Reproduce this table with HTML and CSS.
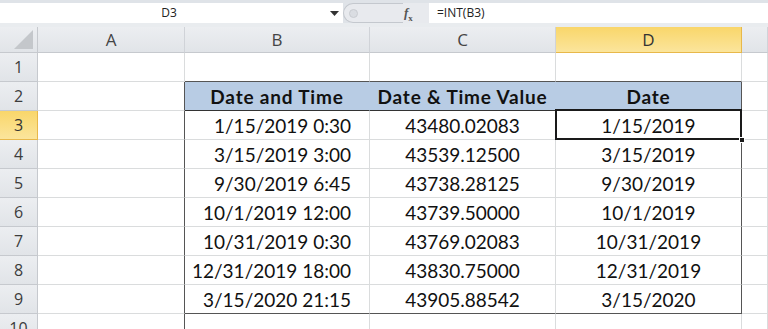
FILE: index.html
```html
<!DOCTYPE html>
<html lang="en">
<head>
    <meta charset="UTF-8">
    <meta name="viewport" content="width=device-width, initial-scale=1.0">
    <title>INT date</title>
    <link rel="stylesheet" href="styles.css">
</head>
<body>
    <div class="formula-bar">
        <div class="name-box">D3</div>
        <div class="name-drop">
            <svg width="9" height="5" viewBox="0 0 9 5"><path d="M0 0h9L4.5 5z" fill="#333"/></svg>
        </div>
        <div class="pill"><span class="knob"></span></div>
        <div class="fx"><i>f</i><sub>x</sub></div>
        <div class="formula">=INT(B3)</div>
    </div>

    <div class="sheet">
        <div class="row head">
            <div class="rh corner"><span class="tri"></span></div>
            <div class="ch">A</div>
            <div class="ch">B</div>
            <div class="ch">C</div>
            <div class="ch active">D</div>
            <div class="ch"></div>
        </div>

        <div class="row r1">
            <div class="rh">1</div>
            <div class="c"></div>
            <div class="c"></div>
            <div class="c"></div>
            <div class="c"></div>
            <div class="c"></div>
        </div>

        <div class="row thead">
            <div class="rh">2</div>
            <div class="c"></div>
            <div class="c th">Date and Time</div>
            <div class="c th">Date &amp; Time Value</div>
            <div class="c th">Date</div>
            <div class="c"></div>
        </div>

        <div class="row">
            <div class="rh active">3</div>
            <div class="c"></div>
            <div class="c dt">1/15/2019 0:30</div>
            <div class="c num">43480.02083</div>
            <div class="c num selected">1/15/2019<span class="handle"></span></div>
            <div class="c"></div>
        </div>

        <div class="row">
            <div class="rh">4</div>
            <div class="c"></div>
            <div class="c dt">3/15/2019 3:00</div>
            <div class="c num">43539.12500</div>
            <div class="c num">3/15/2019</div>
            <div class="c"></div>
        </div>

        <div class="row">
            <div class="rh">5</div>
            <div class="c"></div>
            <div class="c dt">9/30/2019 6:45</div>
            <div class="c num">43738.28125</div>
            <div class="c num">9/30/2019</div>
            <div class="c"></div>
        </div>

        <div class="row">
            <div class="rh">6</div>
            <div class="c"></div>
            <div class="c dt">10/1/2019 12:00</div>
            <div class="c num">43739.50000</div>
            <div class="c num">10/1/2019</div>
            <div class="c"></div>
        </div>

        <div class="row">
            <div class="rh">7</div>
            <div class="c"></div>
            <div class="c dt">10/31/2019 0:30</div>
            <div class="c num">43769.02083</div>
            <div class="c num">10/31/2019</div>
            <div class="c"></div>
        </div>

        <div class="row">
            <div class="rh">8</div>
            <div class="c"></div>
            <div class="c dt">12/31/2019 18:00</div>
            <div class="c num">43830.75000</div>
            <div class="c num">12/31/2019</div>
            <div class="c"></div>
        </div>

        <div class="row last">
            <div class="rh">9</div>
            <div class="c"></div>
            <div class="c dt">3/15/2020 21:15</div>
            <div class="c num">43905.88542</div>
            <div class="c num">3/15/2020</div>
            <div class="c"></div>
        </div>

        <div class="row">
            <div class="rh">10</div>
            <div class="c"></div>
            <div class="c"></div>
            <div class="c"></div>
            <div class="c"></div>
            <div class="c"></div>
        </div>
    </div>
</body>
</html>
```

FILE: styles.css
```css
* {
    box-sizing: border-box;
    margin: 0;
    padding: 0;
}

body {
    width: 768px;
    height: 329px;
    overflow: hidden;
    background-color: white;
    font-family: 'Open Sans', 'Noto Sans', sans-serif;
}

/* formula bar */
.formula-bar {
    display: flex;
    height: 27px;
    padding-top: 3px;
    background-color: #dfe3e8;
    border-bottom: 4px solid #e9ecef;
}

.name-box {
    width: 330px;
    height: 20px;
    background-color: white;
    text-align: center;
    font-size: 12px;
    line-height: 20px;
    color: #222;
    padding-left: 8px;
}

.name-drop {
    width: 13px;
    height: 20px;
    background-color: white;
    display: flex;
    align-items: center;
}

.pill {
    width: 60px;
    height: 20px;
    background-color: #e8eaee;
    border: 1px solid #c4c8ce;
    border-right: none;
    border-radius: 10px 0 0 10px;
    display: flex;
    align-items: center;
    padding-left: 5px;
}

.knob {
    width: 9px;
    height: 9px;
    border-radius: 50%;
    background-color: #dadde2;
    border: 1px solid #c9ccd1;
}

.fx {
    width: 26px;
    height: 20px;
    background-color: #e8eaee;
    font-family: 'Liberation Serif', serif;
    font-size: 13px;
    line-height: 20px;
    color: #555;
    font-weight: bold;
    padding-left: 1px;
}

.fx sub {
    font-size: 9px;
}

.formula {
    flex: 1;
    height: 20px;
    background-color: white;
    font-size: 12px;
    line-height: 20px;
    color: #222;
    padding-left: 8px;
}

/* sheet grid */
.row {
    display: grid;
    grid-template-columns: 38px 147px 185px 186px 186px 1fr;
    height: 29px;
}

.row.head {
    height: 26px;
}

.rh,
.ch {
    background: linear-gradient(#eceef1, #e1e4e8);
    color: #444;
    font-size: 17px;
    display: flex;
    align-items: center;
    justify-content: center;
    border-right: 1px solid #c6c9ce;
    border-bottom: 1px solid #c6c9ce;
}

.rh {
    font-size: 16px;
    color: #3c3c3c;
}

.ch {
    border-right-color: #d0d3d8;
}

.corner {
    position: relative;
}

.tri {
    position: absolute;
    right: 4px;
    bottom: 3px;
    width: 0;
    height: 0;
    border-left: 19px solid transparent;
    border-bottom: 19px solid #c4c7cb;
}

.rh.active,
.ch.active {
    background: linear-gradient(#f9d66a, #fbe59c);
    border-color: #e8b84a;
    color: #333;
}

.c {
    border-right: 1px solid #dadcdd;
    border-bottom: 1px solid #dadcdd;
    font-family: Lato, 'Liberation Sans', sans-serif;
    font-size: 19px;
    color: #111;
    display: flex;
    align-items: center;
}

/* table outline B2:D9 */
.r1 .c:nth-child(n+3):nth-child(-n+5) {
    border-bottom-color: #555;
}

.row:not(.head):not(.r1) .c:nth-child(2) {
    border-right-color: #555;
}

.row:nth-child(n+3):nth-child(-n+10) .c:nth-child(5) {
    border-right-color: #555;
}

.row:last-child .c:nth-child(2),
.row:last-child .c:nth-child(5) {
    border-right-color: #dadcdd;
}

.last .c:nth-child(n+3):nth-child(-n+5) {
    border-bottom-color: #555;
}

.th {
    background-color: #b8cce4;
    font-weight: bold;
    letter-spacing: 0.8px;
    justify-content: center;
    border-bottom-color: #333;
    border-right-color: #b8cce4;
}

.thead .th:nth-child(5) {
    border-right-color: #555;
}

.dt {
    justify-content: flex-end;
    padding-right: 18px;
}

.num {
    justify-content: center;
}

.selected {
    position: relative;
}

.selected::after {
    content: '';
    position: absolute;
    left: -1px;
    top: -2px;
    right: -1px;
    bottom: -1px;
    border: 2px solid #1a1a1a;
}

.handle {
    position: absolute;
    right: -4px;
    bottom: -4px;
    width: 6px;
    height: 6px;
    background-color: #1a1a1a;
    border: 1px solid white;
    z-index: 2;
}
```
